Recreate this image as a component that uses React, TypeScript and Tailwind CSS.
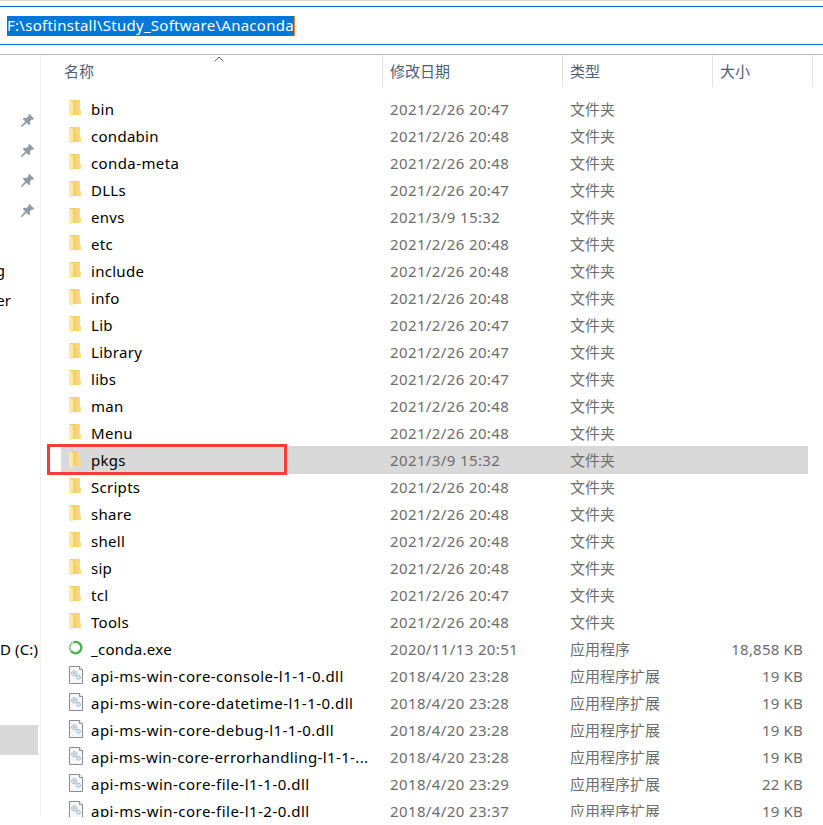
import { useState } from "react"

type FileKind = "folder" | "conda" | "dll"

interface FileEntry {
  name: string
  date: string
  kind: FileKind
  size?: string
}

const entries: FileEntry[] = [
  { name: "bin", date: "2021/2/26 20:47", kind: "folder" },
  { name: "condabin", date: "2021/2/26 20:48", kind: "folder" },
  { name: "conda-meta", date: "2021/2/26 20:48", kind: "folder" },
  { name: "DLLs", date: "2021/2/26 20:47", kind: "folder" },
  { name: "envs", date: "2021/3/9 15:32", kind: "folder" },
  { name: "etc", date: "2021/2/26 20:48", kind: "folder" },
  { name: "include", date: "2021/2/26 20:48", kind: "folder" },
  { name: "info", date: "2021/2/26 20:48", kind: "folder" },
  { name: "Lib", date: "2021/2/26 20:47", kind: "folder" },
  { name: "Library", date: "2021/2/26 20:47", kind: "folder" },
  { name: "libs", date: "2021/2/26 20:47", kind: "folder" },
  { name: "man", date: "2021/2/26 20:48", kind: "folder" },
  { name: "Menu", date: "2021/2/26 20:48", kind: "folder" },
  { name: "pkgs", date: "2021/3/9 15:32", kind: "folder" },
  { name: "Scripts", date: "2021/2/26 20:48", kind: "folder" },
  { name: "share", date: "2021/2/26 20:48", kind: "folder" },
  { name: "shell", date: "2021/2/26 20:48", kind: "folder" },
  { name: "sip", date: "2021/2/26 20:48", kind: "folder" },
  { name: "tcl", date: "2021/2/26 20:47", kind: "folder" },
  { name: "Tools", date: "2021/2/26 20:48", kind: "folder" },
  { name: "_conda.exe", date: "2020/11/13 20:51", kind: "conda", size: "18,858 KB" },
  { name: "api-ms-win-core-console-l1-1-0.dll", date: "2018/4/20 23:28", kind: "dll", size: "19 KB" },
  { name: "api-ms-win-core-datetime-l1-1-0.dll", date: "2018/4/20 23:28", kind: "dll", size: "19 KB" },
  { name: "api-ms-win-core-debug-l1-1-0.dll", date: "2018/4/20 23:28", kind: "dll", size: "19 KB" },
  { name: "api-ms-win-core-errorhandling-l1-1-...", date: "2018/4/20 23:28", kind: "dll", size: "19 KB" },
  { name: "api-ms-win-core-file-l1-1-0.dll", date: "2018/4/20 23:29", kind: "dll", size: "22 KB" },
  { name: "api-ms-win-core-file-l1-2-0.dll", date: "2018/4/20 23:37", kind: "dll", size: "19 KB" },
]

const kindLabels: Record<FileKind, string> = {
  folder: "文件夹",
  conda: "应用程序",
  dll: "应用程序扩展",
}

function getNameTracking(entry: FileEntry) {
  if (entry.name.endsWith("...")) return "tracking-[0.37px]"
  if (entry.kind === "dll") return "tracking-[0.47px]"
  if (entry.name.includes("-")) return "tracking-[0.4px]"
  return "tracking-[0.28px]"
}

function FolderIcon() {
  return (
    <svg width="12" height="17" viewBox="0 0 12 17" className="mt-1 block">
      <defs>
        <linearGradient id="folderBack" x1="0" x2="1" y1="0" y2="0">
          <stop offset="0" stopColor="#eec765" />
          <stop offset="1" stopColor="#fadd87" />
        </linearGradient>
      </defs>
      <path d="M1 0H11V10H12V15H3Z" fill="url(#folderBack)" />
      <path d="M0 0L4 2V15.5L3 17L0 15Z" fill="#ffe9a6" />
    </svg>
  )
}

function CondaIcon() {
  return (
    <svg width="15" height="15" viewBox="0 0 15 15" fill="none" className="-ml-px mt-[4px] block">
      <path d="M5.6 2.2A5.7 5.7 0 1 1 3.2 11.2" stroke="#43b04b" strokeWidth="2.4" />
      <path d="M3.2 11.2A5.7 5.7 0 0 1 5.6 2.2" stroke="#6cc070" strokeWidth="2" strokeDasharray="1.4 0.6" />
    </svg>
  )
}

function DllIcon() {
  return (
    <svg width="14" height="18" viewBox="0 0 14 18" fill="none" className="mt-[3px] block">
      <path d="M.5 .5H10.5L13.5 3.5V17.5H.5Z" fill="#f7f7f7" stroke="#8c8c8c" />
      <path d="M10.5 .5V3.5H13.5" fill="#fff" stroke="#8c8c8c" />
      <circle cx="5.2" cy="7.3" r="2.6" stroke="#8f989f" strokeWidth="1" strokeDasharray="1.2 .5" />
      <circle cx="5.2" cy="7.3" r="1" stroke="#9aa3a9" strokeWidth=".8" />
      <circle cx="9.5" cy="11.2" r="1.8" fill="#eef8fd" stroke="#7fb4d5" strokeWidth="1.1" strokeDasharray="1.3 .3" />
    </svg>
  )
}

function PinIcon() {
  return (
    <svg width="13" height="13" viewBox="0 0 13 13" className="block">
      <path d="M8.4 0L13 4.6L12 5.8L10.8 5.4L8.9 7.6L9.2 10L8 11.2L5.5 8.7L1 13L0 12.8V12L4.2 7.4L1.8 5L2.9 3.8L5.4 4.1L7.6 2.2L7.2 1Z" fill="#919ba3" />
    </svg>
  )
}

const icons: Record<FileKind, () => React.JSX.Element> = {
  folder: FolderIcon,
  conda: CondaIcon,
  dll: DllIcon,
}

function Sidebar() {
  return (
    <aside className="flex w-[41px] shrink-0 flex-col overflow-hidden border-r border-[#f3f3f3]">
      <div className="flex flex-col gap-[17px] pt-[59px] pl-[21px]">
        {[0, 1, 2, 3].map((pin) => (
          <PinIcon key={pin} />
        ))}
      </div>
      <div className="mt-[38px] flex h-[30px] w-[5px] items-center justify-end">g</div>
      <div className="flex h-[29px] w-[11px] items-center justify-end">er</div>
      <div className="mt-[320px] flex h-[30px] w-[38px] items-center justify-end whitespace-nowrap tracking-[0.1px]">
        D (C:)
      </div>
      <div className="mt-[61px] h-[30px] w-[38px] bg-[#d9d9d9]" />
    </aside>
  )
}

function FileRow({ entry, selected, onSelect }: { entry: FileEntry; selected: boolean; onSelect: () => void }) {
  const Icon = icons[entry.kind]

  return (
    <div
      onClick={onSelect}
      className={`relative flex h-[27px] w-[747px] shrink-0 items-start text-[#6d6d6d] ${selected ? "bg-[#d9d9d9] shadow-[0_-1px_0_#d9d9d9]" : ""}`}
    >
      <div className="h-full w-[30px] pl-2">
        <Icon />
      </div>
      <span className={`w-[299px] pt-[3px] whitespace-nowrap text-black ${getNameTracking(entry)}`}>
        {entry.name}
      </span>
      <span className="w-[180px] pt-[3px] whitespace-nowrap tracking-[0.38px]">{entry.date}</span>
      <span className="w-[120px] pt-[3px]">{kindLabels[entry.kind]}</span>
      <span className="w-[113px] pt-[3px] text-right tracking-[0.2px]">{entry.size}</span>
      {selected && (
        <div className="absolute -top-[3px] -left-[14px] h-[31px] w-[240px] border-[3px] border-[#fb3b3a]" />
      )}
    </div>
  )
}

export default function App() {
  const [selected, setSelected] = useState("pkgs")

  return (
    <div className="h-[825px] w-[823px] overflow-hidden bg-white font-['Noto_Sans','Noto_Sans_CJK_SC',sans-serif] text-[15px] leading-[20px] text-black">
      <div className="h-px bg-[#d9d9d9]" />
      <div className="mt-[5px] flex h-[39px] items-center border-y border-[#0078d7] pl-[7px]">
        <span className="h-5 w-[288px] border-r border-[#ff8728] bg-[#0078d7] leading-[18px] tracking-[0.27px] whitespace-nowrap text-white">
          F:\softinstall\Study_Software\Anaconda
        </span>
      </div>
      <div className="mt-[9px] h-px bg-[#b9b9b9]" />
      <div className="flex h-[762px] overflow-hidden">
        <Sidebar />
        <main className="flex flex-1 flex-col">
          <header className="flex h-[32px] shrink-0 items-center text-[#4c607a]">
            <div className="relative w-[341px] pl-[23px]">
              名称
              <svg width="10" height="6" viewBox="0 0 10 6" fill="none" className="absolute -top-[5px] left-[173px]">
                <path d="M.5 5.5L5 1L9.5 5.5" stroke="#666" />
              </svg>
            </div>
            <div className="flex h-full w-[180px] items-center border-l border-[#e2e2e2] pl-[7px]">修改日期</div>
            <div className="flex h-full w-[150px] items-center border-l border-[#e2e2e2] pl-[7px]">类型</div>
            <div className="flex h-full w-[101px] items-center border-x border-[#e2e2e2] pl-[7px]">大小</div>
          </header>
          <div className="flex flex-col pt-[9px] pl-5">
            {entries.map((entry) => (
              <FileRow
                key={entry.name}
                entry={entry}
                selected={entry.name === selected}
                onSelect={() => setSelected(entry.name)}
              />
            ))}
          </div>
        </main>
      </div>
    </div>
  )
}
